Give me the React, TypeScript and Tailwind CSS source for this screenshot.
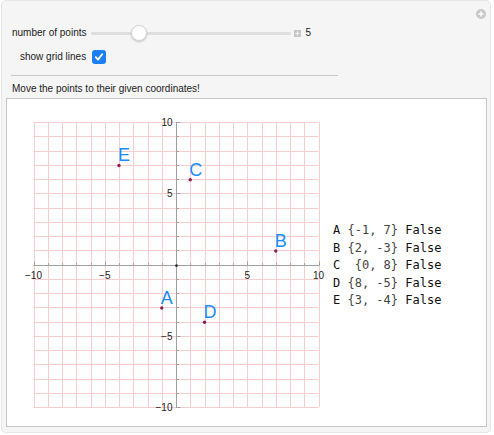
import React from 'react';

const X = (u: number) => 176 + 14.25 * u;
const Y = (v: number) => 264.5 - 14.25 * v;
const line = (n: number) => Math.round(n) + 0.5;

const points = [
  { name: 'A', x: -1, y: -3 },
  { name: 'B', x: 7, y: 1 },
  { name: 'C', x: 1, y: 6 },
  { name: 'D', x: 2, y: -4 },
  { name: 'E', x: -4, y: 7 },
];

const targets = [
  { name: 'A', coords: '{-1, 7}' },
  { name: 'B', coords: '{2, -3}' },
  { name: 'C', coords: ' {0, 8}' },
  { name: 'D', coords: '{8, -5}' },
  { name: 'E', coords: '{3, -4}' },
];

const steps = Array.from({ length: 21 }, (_, i) => i - 10);

function Plot() {
  return (
    <svg width={320} height={327} viewBox="7 99 320 327" className="shrink-0">
      {/* grid */}
      {steps.map((s) => (
        <g key={s} stroke="#f7cdcd" strokeWidth={1}>
          <line x1={line(X(s))} x2={line(X(s))} y1={Y(10)} y2={Y(-10)} />
          <line x1={X(-10)} x2={X(10)} y1={line(Y(s))} y2={line(Y(s))} />
        </g>
      ))}

      {/* axes */}
      <g stroke="#a0a0a0" strokeWidth={1}>
        <line x1={line(X(0))} x2={line(X(0))} y1={Y(10)} y2={Y(-10) + 1} />
        <line x1={X(-10)} x2={X(10) + 1} y1={line(Y(0))} y2={line(Y(0))} />
        {steps.map((s) => {
          const major = s % 5 === 0;
          return (
            <g key={s}>
              <line x1={line(X(s))} x2={line(X(s))} y1={line(Y(0))} y2={line(Y(0)) - (major ? 4 : 2.5)} />
              <line x1={line(X(0))} x2={line(X(0)) + (major ? 4 : 2.5)} y1={line(Y(s))} y2={line(Y(s))} />
            </g>
          );
        })}
      </g>

      {/* tick labels */}
      <g fontFamily='"Liberation Sans", Arial, sans-serif' fontSize={10} fill="#222">
        {[-10, -5, 5, 10].map((s) => (
          <text key={`x${s}`} x={X(s)} y={279} textAnchor="middle">
            {s < 0 ? `\u2212${-s}` : s}
          </text>
        ))}
        {[-10, -5, 5, 10].map((s) => (
          <text key={`y${s}`} x={172.5} y={Y(s) + 3.8} textAnchor="end">
            {s < 0 ? `\u2212${-s}` : s}
          </text>
        ))}
      </g>

      <circle cx={X(0) + 0.5} cy={Y(0) + 1.2} r={1.4} fill="#333" />

      {/* draggable points */}
      {points.map((p) => (
        <g key={p.name}>
          <circle cx={X(p.x)} cy={Y(p.y) + 0.8} r={1.7} fill="#8c1f4f" />
          <text
            x={X(p.x) - 1}
            y={Y(p.y) - 3.5}
            fontFamily='"Liberation Sans", Arial, sans-serif'
            fontSize={18}
            fill="#1a8cff"
          >
            {p.name}
          </text>
        </g>
      ))}
    </svg>
  );
}

export default function App() {
  return (
    <div className="w-[494px] h-[435px] bg-white font-['Liberation_Sans',Arial,sans-serif] text-[#222]">
      <div className="ml-[1px] w-[490px] h-[433px] rounded-[5px] bg-[#f5f5f5] border border-[#e6e6e6] pt-[8px]">
        {/* corner button */}
        <div className="flex justify-end pr-[4px] h-[10px]">
          <svg width={10} height={10} viewBox="0 0 10 10">
            <circle cx={5} cy={5} r={5} fill="#c9c9c9" />
            <path d="M5 2.4v5.2M2.4 5h5.2" stroke="#fff" strokeWidth={1.5} />
          </svg>
        </div>

        {/* number of points */}
        <div className="flex items-center h-[16px] mt-[6px] pl-[10px]">
          <span className="text-[10px] leading-[12px]">number of points</span>
          <div className="relative ml-[4px] w-[200px] h-[3px] rounded-full bg-[#dedede]">
            <div className="absolute left-[40px] top-[-6.5px] w-[16px] h-[16px] rounded-full bg-white border border-[#d6d6d6] shadow-[0_1px_2px_rgba(0,0,0,0.2)]" />
          </div>
          <div className="ml-[3px] w-[7px] h-[7px] bg-[#c6c6c6] flex items-center justify-center">
            <svg width={7} height={7} viewBox="0 0 7 7">
              <path d="M3.5 1.5v4M1.5 3.5h4" stroke="#fff" strokeWidth={1} />
            </svg>
          </div>
          <span className="ml-[5px] text-[10px] leading-[12px]">5</span>
        </div>

        {/* show grid lines */}
        <div className="flex items-center h-[14px] mt-[9px] pl-[18px]">
          <span className="text-[10px] leading-[12px]">show grid lines</span>
          <div className="ml-[6px] w-[14px] h-[14px] rounded-[3px] bg-[#1b7ff6] flex items-center justify-center">
            <svg width={10} height={10} viewBox="0 0 10 10">
              <path d="M1.8 5.2l2.2 2.4 4.2-5.4" fill="none" stroke="#fff" strokeWidth={1.8} strokeLinecap="round" strokeLinejoin="round" />
            </svg>
          </div>
        </div>

        <div className="ml-[9px] mt-[11px] w-[327px] border-t border-[#c8c8c8]" />

        <div className="ml-[10px] mt-[7px] text-[10px] leading-[12px]">Move the points to their given coordinates!</div>

        {/* output pane */}
        <div className="ml-[4px] mt-[3px] w-[481px] h-[329px] bg-white border border-[#c6c6c6] flex">
          <Plot />
          <div className="ml-[6px] pt-[123px] flex flex-col font-['DejaVu_Sans_Mono',monospace] text-[12px] leading-[17.6px] text-[#111] whitespace-pre">
            {targets.map((t) => (
              <div key={t.name}>
                {t.name} <span className="text-[#444]">{t.coords}</span> False
              </div>
            ))}
          </div>
        </div>
      </div>
    </div>
  );
}
